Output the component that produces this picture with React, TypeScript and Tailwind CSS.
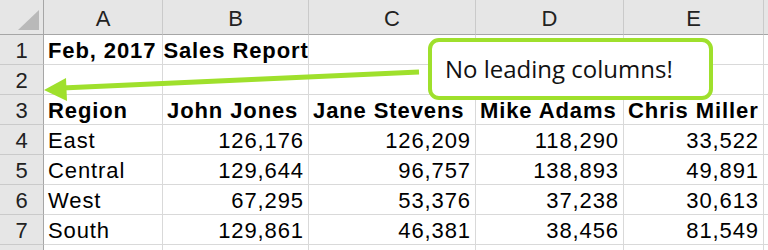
import React from 'react';

const COLS = ['A', 'B', 'C', 'D', 'E'];

type Row = { n: number; cells: string[]; bold?: boolean };

const ROWS: Row[] = [
  { n: 1, cells: ['Feb, 2017 Sales Report', '', '', '', ''], bold: true },
  { n: 2, cells: ['', '', '', '', ''] },
  { n: 3, cells: ['Region', 'John Jones', 'Jane Stevens', 'Mike Adams', 'Chris Miller'], bold: true },
  { n: 4, cells: ['East', '126,176', '126,209', '118,290', '33,522'] },
  { n: 5, cells: ['Central', '129,644', '96,757', '138,893', '49,891'] },
  { n: 6, cells: ['West', '67,295', '53,376', '37,238', '30,613'] },
  { n: 7, cells: ['South', '129,861', '46,381', '38,456', '81,549'] },
];

const cellFont = "font-['Liberation_Sans',Arial,sans-serif] text-[22px] tracking-[0.9px] text-black";

const isNumber = (s: string) => /^[\d,]+$/.test(s);

export default function App() {
  return (
    <div className="relative w-[768px] h-[250px] overflow-hidden bg-white">
      <div className="grid grid-cols-[44px_119px_146px_167px_148px_140px_1fr] grid-rows-[35px_repeat(7,30px)_1fr] h-full">
        {/* corner */}
        <div className="relative bg-[#e6e6e6] border-r border-b border-[#a6a6a6]">
          <svg className="absolute left-[18px] top-[10px]" width="21" height="20" viewBox="0 0 21 20">
            <polygon points="21,0 21,20 0,20" fill="#b9b9b9" />
          </svg>
        </div>
        {COLS.map((c) => (
          <div
            key={c}
            className="flex items-center justify-center bg-[#e6e6e6] border-r border-r-[#cacaca] border-b border-b-[#a6a6a6] pt-[2px] font-['Liberation_Sans',Arial,sans-serif] text-[22px] text-[#222]"
          >
            {c}
          </div>
        ))}
        <div className="bg-[#e6e6e6] border-b border-[#a6a6a6]" />

        {ROWS.map((row) => (
          <React.Fragment key={row.n}>
            <div className="flex items-center justify-center bg-[#e6e6e6] border-r border-r-[#a6a6a6] border-b border-b-[#cacaca] pt-[1px] font-['Liberation_Sans',Arial,sans-serif] text-[22px] text-[#222]">
              {row.n}
            </div>
            {row.cells.map((v, i) => (
              <div
                key={i}
                className={`flex items-center border-r border-b border-[#d9d9d9] pt-[1px] whitespace-nowrap ${
                  isNumber(v) ? 'justify-end pr-[4px]' : 'justify-start pl-[4px]'
                } ${row.n === 1 ? 'overflow-visible' : 'overflow-hidden'} ${row.bold ? 'font-bold' : ''} ${cellFont}`}
              >
                {v}
              </div>
            ))}
            <div className="border-b border-[#d9d9d9]" />
          </React.Fragment>
        ))}

        <div className="bg-[#e6e6e6] border-r border-[#a6a6a6]" />
        {COLS.map((c) => (
          <div key={c} className="border-r border-[#d9d9d9]" />
        ))}
        <div />
      </div>

      {/* arrow */}
      <svg className="absolute left-0 top-0 pointer-events-none" width="768" height="250" viewBox="0 0 768 250">
        <line x1="419" y1="72" x2="62" y2="88" stroke="#9fe02c" strokeWidth="5" />
        <polygon points="44,90 66,78 67,101" fill="#9fe02c" />
      </svg>

      {/* callout */}
      <div className="absolute left-[428px] top-[38px] w-[285px] h-[62px] flex items-center pl-[13px] bg-white border-[4px] border-[#9fe02c] rounded-[11px] font-['Open_Sans',sans-serif] text-[24px] text-[#111]">
        No leading columns!
      </div>
    </div>
  );
}
